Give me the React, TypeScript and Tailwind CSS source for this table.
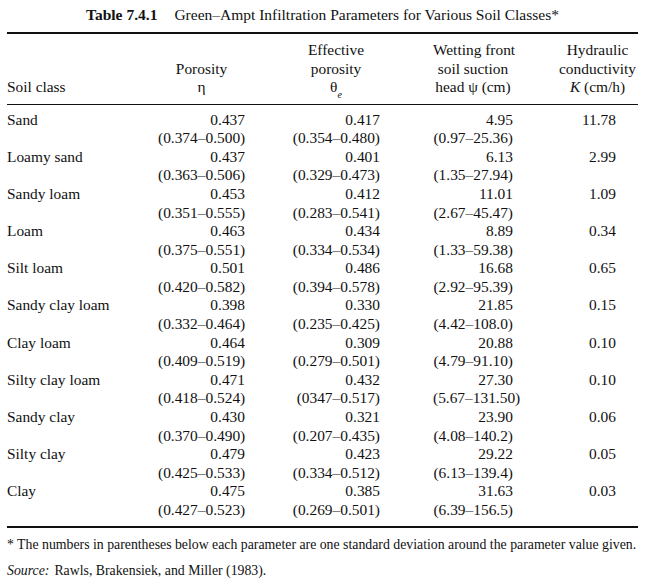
import React from "react";

const soils = [
  ["Sand", "0.437", "(0.374–0.500)", "0.417", "(0.354–0.480)", "4.95", "(0.97–25.36)", "11.78"],
  ["Loamy sand", "0.437", "(0.363–0.506)", "0.401", "(0.329–0.473)", "6.13", "(1.35–27.94)", "2.99"],
  ["Sandy loam", "0.453", "(0.351–0.555)", "0.412", "(0.283–0.541)", "11.01", "(2.67–45.47)", "1.09"],
  ["Loam", "0.463", "(0.375–0.551)", "0.434", "(0.334–0.534)", "8.89", "(1.33–59.38)", "0.34"],
  ["Silt loam", "0.501", "(0.420–0.582)", "0.486", "(0.394–0.578)", "16.68", "(2.92–95.39)", "0.65"],
  ["Sandy clay loam", "0.398", "(0.332–0.464)", "0.330", "(0.235–0.425)", "21.85", "(4.42–108.0)", "0.15"],
  ["Clay loam", "0.464", "(0.409–0.519)", "0.309", "(0.279–0.501)", "20.88", "(4.79–91.10)", "0.10"],
  ["Silty clay loam", "0.471", "(0.418–0.524)", "0.432", "(0347–0.517)", "27.30", "(5.67–131.50)", "0.10"],
  ["Sandy clay", "0.430", "(0.370–0.490)", "0.321", "(0.207–0.435)", "23.90", "(4.08–140.2)", "0.06"],
  ["Silty clay", "0.479", "(0.425–0.533)", "0.423", "(0.334–0.512)", "29.22", "(6.13–139.4)", "0.05"],
  ["Clay", "0.475", "(0.427–0.523)", "0.385", "(0.269–0.501)", "31.63", "(6.39–156.5)", "0.03"],
];

function Line({ cells }: { cells: React.ReactNode[] }) {
  return (
    <div className="flex h-[18.6px] items-center whitespace-nowrap">
      <div className="w-[151px]">{cells[0]}</div>
      <div className="w-[87px] text-right">{cells[1]}</div>
      <div className="ml-[47px] w-[88px] text-right">{cells[2]}</div>
      <div className="ml-[53px] w-[80px] text-right">{cells[3]}</div>
      <div className="ml-[48px] w-[77px] pr-[22px] text-right">{cells[4]}</div>
    </div>
  );
}

export default function App() {
  return (
    <div className="w-[659px] h-[580px] bg-white px-[7px] font-['Liberation_Serif','Times_New_Roman',serif] text-[#111]">
      <div className="w-[631px]">
        {/* Title */}
        <div className="pt-[6px] mb-[7px] h-[25px] text-center text-[15.5px] leading-[18px] whitespace-nowrap">
          <span className="font-bold">Table 7.4.1</span>
          <span className="ml-[17px]">Green–Ampt Infiltration Parameters for Various Soil Classes*</span>
        </div>

        {/* Header */}
        <div className="border-t-2 border-b border-[#111] pt-[7px] pb-[7px] text-[15.4px] leading-[18.6px]">
          <div className="flex items-end whitespace-nowrap">
            <div className="w-[151px]">Soil class</div>
            <div className="w-[87px] text-center">
              <div>Porosity</div>
              <div>η</div>
            </div>
            <div className="ml-[47px] w-[88px] text-center">
              <div>Effective</div>
              <div>porosity</div>
              <div>
                θ<sub className="italic text-[10px] align-[-3px]">e</sub>
              </div>
            </div>
            <div className="ml-[53px] w-[80px] text-center">
              <div>Wetting front</div>
              <div>soil suction</div>
              <div>head ψ (cm)</div>
            </div>
            <div className="ml-[44px] w-[81px] text-center">
              <div>Hydraulic</div>
              <div>conductivity</div>
              <div>
                <span className="italic">K</span> (cm/h)
              </div>
            </div>
          </div>
        </div>

        {/* Body */}
        <div className="border-b-2 border-[#111] pt-[5px] pb-[7px] text-[15.4px]">
          {soils.map((s) => (
            <div key={s[0]}>
              <Line cells={[s[0], s[1], s[3], s[5], s[7]]} />
              <Line cells={["", s[2], s[4], s[6], ""]} />
            </div>
          ))}
        </div>

        {/* Notes */}
        <div className="pt-[4px] text-[13.8px] leading-[26px] whitespace-nowrap">
          <div>* The numbers in parentheses below each parameter are one standard deviation around the parameter value given.</div>
          <div>
            <span className="italic">Source:</span>
            <span className="ml-[5px]">Rawls, Brakensiek, and Miller (1983).</span>
          </div>
        </div>
      </div>
    </div>
  );
}
